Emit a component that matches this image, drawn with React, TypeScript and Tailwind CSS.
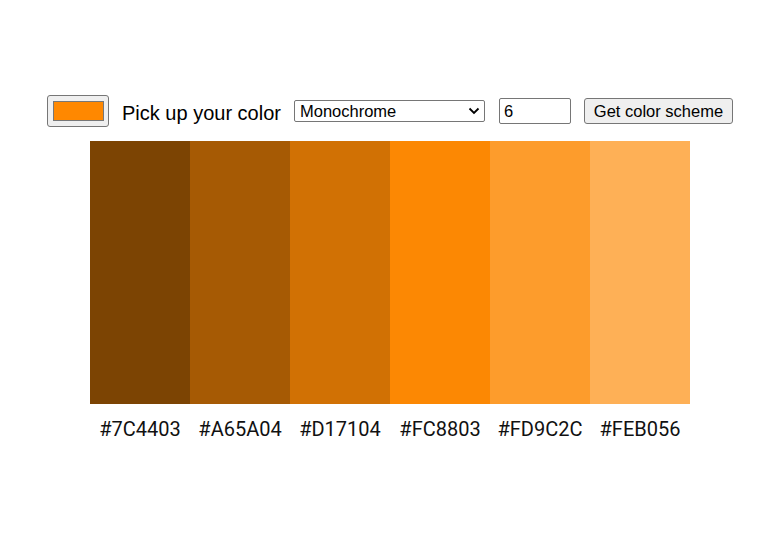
import { useState } from 'react'

const colors = ['#7C4403', '#A65A04', '#D17104', '#FC8803', '#FD9C2C', '#FEB056']

export default function App() {
  const [mode] = useState('Monochrome')
  const [count] = useState('6')

  return (
    <div className="w-[780px] h-[547px] bg-white pt-[95px]" style={{ fontFamily: '"Liberation Sans", Arial, sans-serif' }}>
      {/* Barre de contrôle */}
      <div className="flex items-center justify-center h-[32px]">
        <div className="w-[62px] h-[32px] border border-[#767676] rounded-[3px] bg-[#efefef] flex items-center justify-center">
          <div className="w-[51px] h-[20px] border border-[#777] bg-[#ff8800]" />
        </div>
        <span className="ml-[13px] pt-[4px] text-[20px] text-black leading-none">Pick up your color</span>
        <div className="ml-[13px] w-[191px] h-[22px] border border-[#767676] rounded-[2px] bg-white flex items-center justify-between pl-[5px] pr-[4px]">
          <span className="text-[16.5px] text-black leading-none">{mode}</span>
          <svg width="12" height="8" viewBox="0 0 12 8" fill="none">
            <path d="M1.5 1.5 L6 6 L10.5 1.5" stroke="#000" strokeWidth="1.8" />
          </svg>
        </div>
        <div className="ml-[14px] w-[72px] h-[26px] border border-[#767676] rounded-[2px] bg-white flex items-center pl-[4px]">
          <span className="text-[16.5px] text-black leading-none">{count}</span>
        </div>
        <button className="ml-[13px] w-[149px] h-[26px] border border-[#767676] rounded-[3px] bg-[#efefef] text-[16.5px] text-black leading-none">
          Get color scheme
        </button>
      </div>

      {/* Palette */}
      <div className="mt-[14px] mx-auto w-[600px] flex">
        {colors.map(c => (
          <div key={c} className="w-[100px] flex flex-col items-center">
            <div className="w-[100px] h-[263px]" style={{ backgroundColor: c }} />
            <span className="mt-[13px] text-[20px] text-[#111] leading-[24px]" style={{ fontFamily: 'Roboto, sans-serif' }}>{c}</span>
          </div>
        ))}
      </div>
    </div>
  )
}
